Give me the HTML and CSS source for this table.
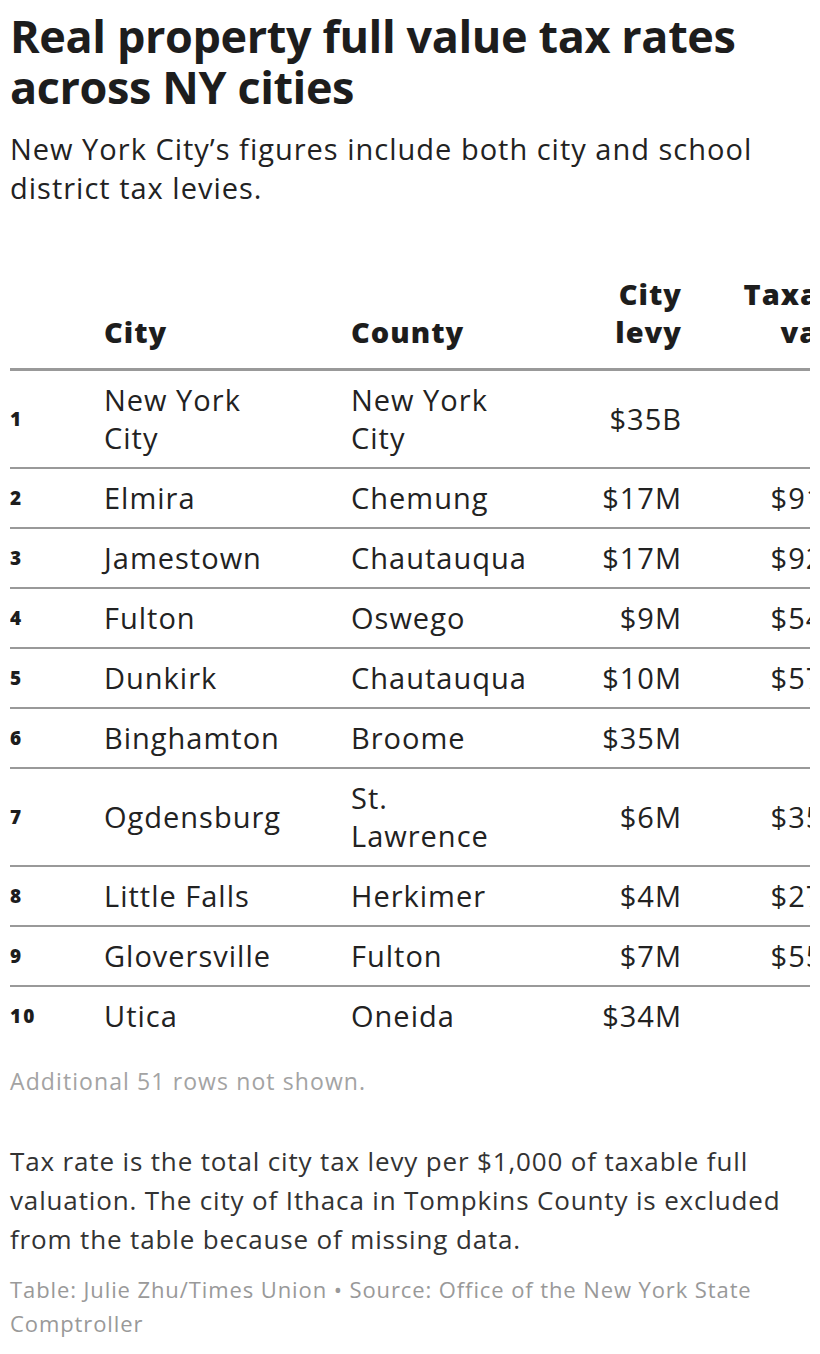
FILE: index.html
```html
<!DOCTYPE html>
<html>
<head>
<meta charset="utf-8">
<link rel="stylesheet" href="styles.css">
</head>
<body>
<div class="chart">
  <h1 class="title">Real property full value tax rates across NY cities</h1>
  <p class="subtitle">New York City’s figures include both city and school district tax levies.</p>
  <div class="table-wrap">
    <table class="tbl">
      <colgroup>
        <col class="c-rank"><col class="c-city"><col class="c-county"><col class="c-levy"><col class="c-tax"><col class="c-rate">
      </colgroup>
      <thead>
        <tr>
          <th></th>
          <th class="left">City</th>
          <th class="left">County</th>
          <th class="num">City<br>levy</th>
          <th class="num">Taxable<br>value</th>
          <th class="num">Tax<br>rate</th>
        </tr>
      </thead>
      <tbody>
        <tr><td class="rank">1</td><td>New York City</td><td>New York City</td><td class="num">$35B</td><td class="num"></td><td class="num"></td></tr>
        <tr><td class="rank">2</td><td>Elmira</td><td>Chemung</td><td class="num">$17M</td><td class="num">$918M</td><td class="num"></td></tr>
        <tr><td class="rank">3</td><td>Jamestown</td><td>Chautauqua</td><td class="num">$17M</td><td class="num">$923M</td><td class="num"></td></tr>
        <tr><td class="rank">4</td><td>Fulton</td><td>Oswego</td><td class="num">$9M</td><td class="num">$541M</td><td class="num"></td></tr>
        <tr><td class="rank">5</td><td>Dunkirk</td><td>Chautauqua</td><td class="num">$10M</td><td class="num">$571M</td><td class="num"></td></tr>
        <tr><td class="rank">6</td><td>Binghamton</td><td>Broome</td><td class="num">$35M</td><td class="num">$2B</td><td class="num"></td></tr>
        <tr><td class="rank">7</td><td>Ogdensburg</td><td>St. Lawrence</td><td class="num">$6M</td><td class="num">$351M</td><td class="num"></td></tr>
        <tr><td class="rank">8</td><td>Little Falls</td><td>Herkimer</td><td class="num">$4M</td><td class="num">$271M</td><td class="num"></td></tr>
        <tr><td class="rank">9</td><td>Gloversville</td><td>Fulton</td><td class="num">$7M</td><td class="num">$551M</td><td class="num"></td></tr>
        <tr><td class="rank">10</td><td>Utica</td><td>Oneida</td><td class="num">$34M</td><td class="num">$2B</td><td class="num"></td></tr>
      </tbody>
    </table>
  </div>
  <p class="more">Additional 51 rows not shown.</p>
  <p class="notes">Tax rate is the total city tax levy per $1,000 of taxable full valuation. The city of Ithaca in Tompkins County is excluded from the table because of missing data.</p>
  <p class="source">Table: Julie Zhu/Times Union • Source: Office of the New York State Comptroller</p>
</div>
</body>
</html>
```
FILE: styles.css
```css
html, body {
  margin: 0;
  padding: 0;
  background: #fff;
}
body {
  font-family: "Open Sans", "Liberation Sans", sans-serif;
  color: #333;
}
.chart {
  padding: 10px 10px 0 10px;
  width: 800px;
}
.title {
  margin: 0;
  font-size: 45px;
  line-height: 51px;
  font-weight: 700;
  color: #1d1d1d;
  letter-spacing: -0.4px;
}
.subtitle {
  margin: 17px 0 0 0;
  font-size: 29px;
  line-height: 39px;
  letter-spacing: 1px;
  color: #222;
}
.table-wrap {
  margin-top: 68px;
  width: 800px;
  overflow: hidden;
}
.tbl {
  border-collapse: collapse;
  table-layout: fixed;
  width: 1000px;
  font-size: 29px;
  line-height: 38px;
  letter-spacing: 1px;
  color: #222;
}
.c-rank { width: 94px; }
.c-city { width: 247px; }
.c-county { width: 231px; }
.c-levy { width: 100px; }
.c-tax { width: 186px; }
.c-rate { width: 142px; }
.tbl th {
  font-weight: 800;
  vertical-align: bottom;
  padding: 0 0 17px 0;
  border-bottom: 3px solid #999;
  text-align: left;
  color: #1d1d1d;
  letter-spacing: 1px;
}
.tbl th.num, .tbl td.num {
  text-align: right;
}
.tbl td {
  padding: 10px 10px 10px 0;
  vertical-align: middle;
  border-bottom: 2px solid #999;
}
.tbl tbody td:nth-child(2) { padding-right: 52px; }
.tbl tbody td:nth-child(3) { padding-right: 50px; }
.tbl td.num {
  padding-right: 0;
}
.tbl tbody tr:last-child td {
  border-bottom: none;
}
.tbl td.rank {
  font-size: 19px;
  font-weight: 800;
  letter-spacing: 2px;
  color: #1d1d1d;
}
.more {
  margin: 21px 0 0 0;
  font-size: 23px;
  line-height: 30px;
  letter-spacing: 1.1px;
  color: #a3a3a3;
}
.notes {
  margin: 46px 0 0 0;
  font-size: 26px;
  line-height: 39px;
  letter-spacing: 0.85px;
  color: #333;
}
.source {
  margin: 13px 0 0 0;
  font-size: 22px;
  line-height: 34px;
  letter-spacing: 0.9px;
  color: #999;
}
```
